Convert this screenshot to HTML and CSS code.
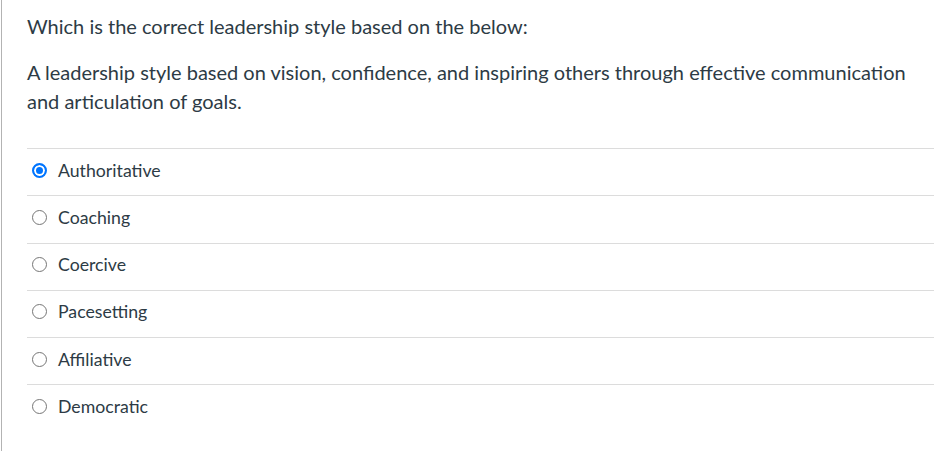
FILE: index.html
```html
<!DOCTYPE html>
<html lang="en">
<head>
    <meta charset="UTF-8">
    <title>Quiz Question</title>
    <link rel="stylesheet" href="styles.css">
</head>
<body>
    <div class="question">
        <div class="question-text">
            <p>Which is the correct leadership style based on the below:</p>
            <p>A leadership style based on vision, confidence, and inspiring others through effective communication and articulation of goals.</p>
        </div>
        <div class="answers">
            <label class="answer"><span class="radio checked"></span>Authoritative</label>
            <label class="answer"><span class="radio"></span>Coaching</label>
            <label class="answer"><span class="radio"></span>Coercive</label>
            <label class="answer"><span class="radio"></span>Pacesetting</label>
            <label class="answer"><span class="radio"></span>Affiliative</label>
            <label class="answer"><span class="radio"></span>Democratic</label>
        </div>
    </div>
</body>
</html>
```

FILE: styles.css
```css
body {
    margin: 0;
    font-family: Lato, "Noto Sans", sans-serif;
    color: #2d3b45;
    background: #fff;
}

.question {
    margin-left: 1px;
    border-left: 1px solid #b3b3b3;
    min-height: 451px;
    padding: 12px 2px 0 25px;
    box-sizing: border-box;
}

.question-text p {
    margin: 0 0 17px;
    font-size: 20px;
    line-height: 29px;
}

.answers {
    margin-top: 32px;
}

.answer {
    display: flex;
    align-items: center;
    gap: 11px;
    height: 42.25px;
    padding: 0 0 4px 5px;
    box-sizing: content-box;
    border-top: 1px solid #dcdcdc;
    font-size: 17.7px;
}

.radio {
    width: 13px;
    height: 13px;
    border: 1px solid #767676;
    border-radius: 50%;
    box-sizing: content-box;
}

.radio.checked {
    border: 2px solid #0075ff;
    width: 11px;
    height: 11px;
    background: #0075ff;
    box-shadow: inset 0 0 0 2px #fff;
}
```
